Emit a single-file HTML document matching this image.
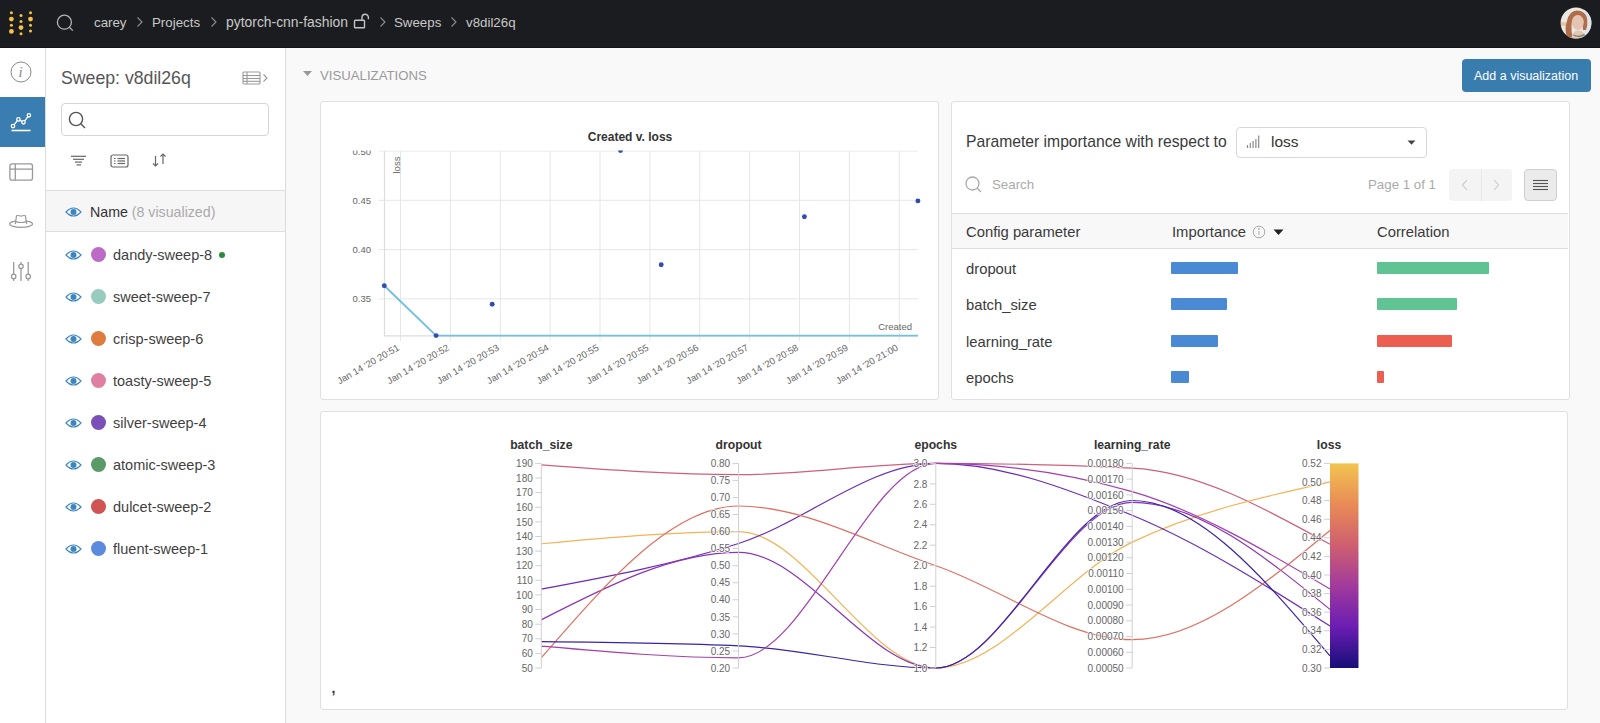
<!DOCTYPE html>
<html><head><meta charset="utf-8">
<style>
*{box-sizing:border-box;margin:0;padding:0}
html,body{width:1600px;height:723px;overflow:hidden;background:#f9f9f9;font-family:"Liberation Sans",sans-serif;color:#333}
.abs{position:absolute;white-space:nowrap;line-height:1}
#top{position:absolute;left:0;top:0;width:1600px;height:48px;background:#1b1c1f;border-bottom:1px solid #121316}
#rail{position:absolute;left:0;top:48px;width:46px;height:675px;background:#fff;border-right:1px solid #dcdcdc}
#side{position:absolute;left:46px;top:48px;width:240px;height:675px;background:#fff;border-right:1px solid #dcdcdc}
.panel{position:absolute;background:#fff;border:1px solid #e0e0e0;border-radius:3px}
.bc{color:#c9c9c9;font-size:13.3px;top:16px}
.chev{color:#8a8a8a}
.run{font-size:14.5px;color:#3f3f3f;left:113px}
.dot{position:absolute;width:15px;height:15px;border-radius:50%;left:91px}
.eye{position:absolute;left:65px}
svg text{font-family:"Liberation Sans",sans-serif}
.tr{font-size:14.8px;color:#3a3a3a;left:966px}
.bar{position:absolute;height:12px;border-radius:1px}
</style></head><body>

<!-- ================= TOP BAR ================= -->
<div id="top">
  <svg width="48" height="48" style="position:absolute;left:0;top:0">
    <g fill="#f6c343">
      <circle cx="11.4" cy="12.8" r="1.5"/><circle cx="11.4" cy="19.1" r="2.4"/><circle cx="11.4" cy="25.3" r="1.5"/><circle cx="11.4" cy="31.4" r="2.4"/>
      <circle cx="21" cy="15.6" r="1.5"/><circle cx="21" cy="21.5" r="1.5"/><circle cx="21" cy="27.6" r="2.4"/><circle cx="21" cy="33.8" r="1.5"/>
      <circle cx="30.5" cy="12.8" r="1.5"/><circle cx="30.5" cy="19.1" r="2.4"/><circle cx="30.5" cy="25.3" r="1.5"/><circle cx="30.5" cy="31" r="1.5"/>
    </g>
  </svg>
  <svg width="24" height="24" style="position:absolute;left:54px;top:11px" fill="none" stroke="#b4b4b4" stroke-width="1.3">
    <circle cx="10.4" cy="11.2" r="7"/><line x1="15.4" y1="16.2" x2="18.8" y2="19.6"/>
  </svg>
  <div class="abs bc" style="left:94px">carey</div>
  <svg class="abs" width="8" height="12" style="left:136px;top:16px" fill="none" stroke="#8f8f8f" stroke-width="1.1"><polyline points="1.5,1.5 6,6 1.5,10.5"/></svg>
  <div class="abs bc" style="left:152px">Projects</div>
  <svg class="abs" width="8" height="12" style="left:210px;top:16px" fill="none" stroke="#8f8f8f" stroke-width="1.1"><polyline points="1.5,1.5 6,6 1.5,10.5"/></svg>
  <div class="abs bc" style="left:226px;font-size:13.9px;top:15.5px">pytorch-cnn-fashion</div>
  <svg class="abs" width="18" height="18" style="left:353px;top:12px" fill="none" stroke="#c4c4c4" stroke-width="1.4">
    <rect x="1.5" y="8.2" width="10" height="7.6" rx="0.8"/><path d="M9 8 V5.5 a3.2 3.2 0 0 1 6.4 0 V7.2"/>
  </svg>
  <svg class="abs" width="8" height="12" style="left:379px;top:16px" fill="none" stroke="#8f8f8f" stroke-width="1.1"><polyline points="1.5,1.5 6,6 1.5,10.5"/></svg>
  <div class="abs bc" style="left:394px">Sweeps</div>
  <svg class="abs" width="8" height="12" style="left:450px;top:16px" fill="none" stroke="#8f8f8f" stroke-width="1.1"><polyline points="1.5,1.5 6,6 1.5,10.5"/></svg>
  <div class="abs bc" style="left:466px">v8dil26q</div>
  <!-- avatar -->
  <svg width="32" height="32" style="position:absolute;left:1560px;top:6.7px">
    <defs><clipPath id="av"><circle cx="16" cy="16" r="15.4"/></clipPath></defs>
    <g clip-path="url(#av)">
      <rect width="32" height="32" fill="#ebe8e3"/>
      <rect x="24" y="0" width="8" height="32" fill="#e1e5ea"/>
      <rect x="1" y="15" width="5" height="4" fill="#e0a868" opacity="0.5"/>
      <path d="M7 30 Q4 22 7 14 Q9 4 17 3.5 Q25 3.5 27 11 Q28 18 26 23 L23 23 Q23 12 17 9 Q12 11 11.5 18 Q11 25 13 31Z" fill="#b06d4a"/>
      <ellipse cx="17.8" cy="15.5" rx="6" ry="7.6" fill="#e6c4b4"/>
      <path d="M11 32 Q13 23 18 23.5 Q24 23 27 32Z" fill="#e3c5b3"/>
      <path d="M24 29 Q27 26.5 31 27.5 L32 32 L25 32Z" fill="#44509a"/>
      <path d="M13.5 28 Q19 31 24.5 27.5" fill="none" stroke="#66806c" stroke-width="1.1"/>
    </g>
  </svg>
</div>

<!-- ================= LEFT RAIL ================= -->
<div id="rail">
  <svg width="24" height="24" style="position:absolute;left:9px;top:12px" fill="none" stroke="#8a8a8a" stroke-width="1">
    <circle cx="12" cy="12" r="10"/>
  </svg>
  <div class="abs" style="left:18.5px;top:17px;font-family:'Liberation Serif',serif;font-style:italic;font-size:15px;color:#8a8a8a">i</div>
  <div style="position:absolute;left:0;top:49px;width:45px;height:50px;background:#3a7db1"></div>
  <svg width="46" height="46" style="position:absolute;left:0;top:52px" fill="none" stroke="#fff" stroke-width="1.3">
    <polyline points="13,126.1 18.4,119.4 23.5,122.3 28.9,115.3" transform="translate(0,-100)"/>
    <g transform="translate(0,-100)" fill="#3a7db1"><circle cx="13" cy="126.1" r="1.7"/><circle cx="18.4" cy="119.4" r="1.7"/><circle cx="23.5" cy="122.3" r="1.7"/><circle cx="28.9" cy="115.3" r="1.7"/></g>
    <line x1="11.5" y1="30.5" x2="30.5" y2="30.5" stroke-width="1.6"/>
  </svg>
  <svg width="46" height="46" style="position:absolute;left:0;top:102px" fill="none" stroke="#999" stroke-width="1.3">
    <rect x="9.9" y="13.8" width="22.6" height="16.4" rx="2.2"/><line x1="9.9" y1="19.1" x2="32.5" y2="19.1"/><line x1="15.3" y1="13.8" x2="15.3" y2="30.2"/>
  </svg>
  <svg width="46" height="46" style="position:absolute;left:0;top:152px" fill="none" stroke="#999" stroke-width="1.2">
    <ellipse cx="21.1" cy="24" rx="11.4" ry="3.3"/>
    <path d="M15.3,24.2 L16.5,15.8 Q18.5,15 21,16.2 Q23.5,15 25.4,15.8 L26.7,24.2" fill="#fff"/>
    <path d="M15.6,21.6 Q21,23.4 26.4,21.6"/>
  </svg>
  <svg width="24" height="24" style="position:absolute;left:9px;top:213px" fill="none" stroke="#9a9a9a" stroke-width="1.3">
    <line x1="4.7" y1="1" x2="4.7" y2="20"/><line x1="12" y1="1" x2="12" y2="20"/><line x1="19.2" y1="1" x2="19.2" y2="20"/>
    <circle cx="4.7" cy="15.4" r="2.2" fill="#fff"/><circle cx="12" cy="5.3" r="2.2" fill="#fff"/><circle cx="19.2" cy="15.4" r="2.2" fill="#fff"/>
  </svg>
</div>

<!-- ================= SIDEBAR ================= -->
<div id="side"></div>
<div class="abs" style="left:61px;top:70px;font-size:17.7px;color:#555">Sweep: v8dil26q</div>
<svg width="30" height="16" style="position:absolute;left:242px;top:70px" fill="none" stroke="#999" stroke-width="1.1">
  <rect x="1" y="2" width="17" height="12" rx="1"/><line x1="1" y1="5.5" x2="18" y2="5.5"/><line x1="1" y1="8.5" x2="18" y2="8.5"/><line x1="1" y1="11.3" x2="18" y2="11.3"/><line x1="5" y1="2" x2="5" y2="14"/>
  <polyline points="21.5,4.5 25,8 21.5,11.5"/>
</svg>
<div style="position:absolute;left:61px;top:103px;width:208px;height:33px;border:1px solid #d6d6d6;border-radius:4px;background:#fff"></div>
<svg width="20" height="20" style="position:absolute;left:67px;top:110px" fill="none" stroke="#555" stroke-width="1.4">
  <circle cx="9" cy="9" r="6.6"/><line x1="13.8" y1="13.8" x2="18" y2="18"/>
</svg>
<svg width="20" height="16" style="position:absolute;left:69px;top:152px" fill="none" stroke="#666" stroke-width="1.2">
  <line x1="2" y1="4.3" x2="17" y2="4.3"/><line x1="4" y1="7.3" x2="15" y2="7.3"/><line x1="6" y1="10.1" x2="13" y2="10.1"/><line x1="7.5" y1="12.9" x2="12" y2="12.9"/>
</svg>
<svg width="22" height="16" style="position:absolute;left:109.7px;top:152.5px" fill="none" stroke="#666" stroke-width="1.2">
  <rect x="1" y="2" width="17" height="12" rx="2"/><line x1="4" y1="5.5" x2="5.5" y2="5.5"/><line x1="4" y1="8" x2="5.5" y2="8"/><line x1="4" y1="10.5" x2="5.5" y2="10.5"/>
  <line x1="7.5" y1="5.5" x2="15" y2="5.5"/><line x1="7.5" y1="8" x2="15" y2="8"/><line x1="7.5" y1="10.5" x2="15" y2="10.5"/>
</svg>
<svg width="18" height="16" style="position:absolute;left:151px;top:152px" fill="none" stroke="#666" stroke-width="1.2">
  <line x1="4.5" y1="4" x2="4.5" y2="14"/><polyline points="2,11.5 4.5,14 7,11.5"/>
  <line x1="12" y1="2" x2="12" y2="12"/><polyline points="9.5,4.5 12,2 14.5,4.5"/>
</svg>
<div style="position:absolute;left:46px;top:190px;width:239px;height:42px;background:#f6f6f6;border-top:1px solid #dedede;border-bottom:1px solid #dedede"></div>
<svg width="18" height="12" style="position:absolute;left:65px;top:206px"><path d="M1 6 Q8.5 -2 16 6 Q8.5 14 1 6Z" fill="none" stroke="#3d85bf" stroke-width="1.1"/><circle cx="8.5" cy="6" r="3" fill="#3d85bf"/></svg>
<div class="abs" style="left:90px;top:204.5px;font-size:14.2px;color:#333">Name <span style="color:#aaa">(8 visualized)</span></div>

<svg width="18" height="12" style="position:absolute;left:65px;top:248.6px"><path d="M1 6 Q8.5 -2 16 6 Q8.5 14 1 6Z" fill="none" stroke="#3d85bf" stroke-width="1.1"/><circle cx="8.5" cy="6" r="3" fill="#3d85bf"/></svg>
<div class="dot" style="top:247.1px;background:#b96bc5"></div>
<div class="abs run" style="top:248.1px">dandy-sweep-8</div>
<svg width="18" height="12" style="position:absolute;left:65px;top:290.6px"><path d="M1 6 Q8.5 -2 16 6 Q8.5 14 1 6Z" fill="none" stroke="#3d85bf" stroke-width="1.1"/><circle cx="8.5" cy="6" r="3" fill="#3d85bf"/></svg>
<div class="dot" style="top:289.1px;background:#96cbbd"></div>
<div class="abs run" style="top:290.1px">sweet-sweep-7</div>
<svg width="18" height="12" style="position:absolute;left:65px;top:332.6px"><path d="M1 6 Q8.5 -2 16 6 Q8.5 14 1 6Z" fill="none" stroke="#3d85bf" stroke-width="1.1"/><circle cx="8.5" cy="6" r="3" fill="#3d85bf"/></svg>
<div class="dot" style="top:331.1px;background:#e07b40"></div>
<div class="abs run" style="top:332.1px">crisp-sweep-6</div>
<svg width="18" height="12" style="position:absolute;left:65px;top:374.6px"><path d="M1 6 Q8.5 -2 16 6 Q8.5 14 1 6Z" fill="none" stroke="#3d85bf" stroke-width="1.1"/><circle cx="8.5" cy="6" r="3" fill="#3d85bf"/></svg>
<div class="dot" style="top:373.1px;background:#e080a0"></div>
<div class="abs run" style="top:374.1px">toasty-sweep-5</div>
<svg width="18" height="12" style="position:absolute;left:65px;top:416.6px"><path d="M1 6 Q8.5 -2 16 6 Q8.5 14 1 6Z" fill="none" stroke="#3d85bf" stroke-width="1.1"/><circle cx="8.5" cy="6" r="3" fill="#3d85bf"/></svg>
<div class="dot" style="top:415.1px;background:#7a50b8"></div>
<div class="abs run" style="top:416.1px">silver-sweep-4</div>
<svg width="18" height="12" style="position:absolute;left:65px;top:458.6px"><path d="M1 6 Q8.5 -2 16 6 Q8.5 14 1 6Z" fill="none" stroke="#3d85bf" stroke-width="1.1"/><circle cx="8.5" cy="6" r="3" fill="#3d85bf"/></svg>
<div class="dot" style="top:457.1px;background:#5a9a68"></div>
<div class="abs run" style="top:458.1px">atomic-sweep-3</div>
<svg width="18" height="12" style="position:absolute;left:65px;top:500.6px"><path d="M1 6 Q8.5 -2 16 6 Q8.5 14 1 6Z" fill="none" stroke="#3d85bf" stroke-width="1.1"/><circle cx="8.5" cy="6" r="3" fill="#3d85bf"/></svg>
<div class="dot" style="top:499.1px;background:#d05454"></div>
<div class="abs run" style="top:500.1px">dulcet-sweep-2</div>
<svg width="18" height="12" style="position:absolute;left:65px;top:542.6px"><path d="M1 6 Q8.5 -2 16 6 Q8.5 14 1 6Z" fill="none" stroke="#3d85bf" stroke-width="1.1"/><circle cx="8.5" cy="6" r="3" fill="#3d85bf"/></svg>
<div class="dot" style="top:541.1px;background:#5b8ade"></div>
<div class="abs run" style="top:542.1px">fluent-sweep-1</div>
<div style="position:absolute;left:219px;top:251.6px;width:6px;height:6px;border-radius:50%;background:#2e8a3a"></div>


<!-- ================= MAIN ================= -->
<svg width="12" height="8" style="position:absolute;left:302px;top:70px"><polygon points="1,1 10,1 5.5,6" fill="#999"/></svg>
<div class="abs" style="left:320px;top:69px;font-size:13.2px;color:#999">VISUALIZATIONS</div>
<div style="position:absolute;left:1462px;top:59px;width:129px;height:33px;background:#397cae;border-radius:4px"></div>
<div class="abs" style="left:1474px;top:70px;font-size:12.5px;color:#fff">Add a visualization</div>

<!-- panel 1 -->
<div class="panel" style="left:320px;top:101px;width:619px;height:299px"></div>
<svg width="1600" height="723" style="position:absolute;left:0;top:0" font-size="9.5" fill="#666">
  <text x="630" y="140.5" text-anchor="middle" font-weight="bold" font-size="12" fill="#333">Created v. loss</text>
  <defs><clipPath id="pc1"><rect x="330" y="150.5" width="600" height="250"/></clipPath></defs>
  <g clip-path="url(#pc1)">
  <line x1="400.5" y1="151" x2="400.5" y2="341" stroke="#e6e6e6" stroke-width="1"/><line x1="450.38" y1="151" x2="450.38" y2="341" stroke="#e6e6e6" stroke-width="1"/><line x1="500.26" y1="151" x2="500.26" y2="341" stroke="#e6e6e6" stroke-width="1"/><line x1="550.14" y1="151" x2="550.14" y2="341" stroke="#e6e6e6" stroke-width="1"/><line x1="600.02" y1="151" x2="600.02" y2="341" stroke="#e6e6e6" stroke-width="1"/><line x1="649.9" y1="151" x2="649.9" y2="341" stroke="#e6e6e6" stroke-width="1"/><line x1="699.78" y1="151" x2="699.78" y2="341" stroke="#e6e6e6" stroke-width="1"/><line x1="749.6600000000001" y1="151" x2="749.6600000000001" y2="341" stroke="#e6e6e6" stroke-width="1"/><line x1="799.54" y1="151" x2="799.54" y2="341" stroke="#e6e6e6" stroke-width="1"/><line x1="849.4200000000001" y1="151" x2="849.4200000000001" y2="341" stroke="#e6e6e6" stroke-width="1"/><line x1="899.3" y1="151" x2="899.3" y2="341" stroke="#e6e6e6" stroke-width="1"/><line x1="378.5" y1="151" x2="918" y2="151" stroke="#e6e6e6" stroke-width="1"/><line x1="378.5" y1="200.3" x2="918" y2="200.3" stroke="#e6e6e6" stroke-width="1"/><line x1="378.5" y1="249.6" x2="918" y2="249.6" stroke="#e6e6e6" stroke-width="1"/><line x1="378.5" y1="298.9" x2="918" y2="298.9" stroke="#e6e6e6" stroke-width="1"/>
  <text x="371" y="154.5" text-anchor="end">0.50</text><text x="371" y="203.8" text-anchor="end">0.45</text><text x="371" y="253.1" text-anchor="end">0.40</text><text x="371" y="302.4" text-anchor="end">0.35</text>
  </g>
  <line x1="384.5" y1="151" x2="384.5" y2="336" stroke="#dedede" stroke-width="1.2"/>
  <line x1="384" y1="335.8" x2="918" y2="335.8" stroke="#dedede" stroke-width="1.2"/>
  <text transform="translate(400,173.5) rotate(-90)" font-size="9.5" fill="#666">loss</text>
  <text x="912" y="330" text-anchor="end" font-size="9.5" fill="#666">Created</text>
  <polyline points="384.3,285.8 436.1,335.6 918,335.6" fill="none" stroke="#72c0de" stroke-width="1.9"/>
  <g clip-path="url(#pc1)"><circle cx="384.3" cy="285.8" r="2.45" fill="#2f4cb3"/><circle cx="436.1" cy="335.6" r="2.45" fill="#2f4cb3"/><circle cx="492.2" cy="304.2" r="2.45" fill="#2f4cb3"/><circle cx="620.5" cy="150.5" r="2.45" fill="#2f4cb3"/><circle cx="661.2" cy="264.8" r="2.45" fill="#2f4cb3"/><circle cx="804.4" cy="216.7" r="2.45" fill="#2f4cb3"/><circle cx="917.9" cy="200.9" r="2.45" fill="#2f4cb3"/></g>
  <text transform="translate(400.0,349.5) rotate(-30)" text-anchor="end">Jan 14 '20 20:51</text><text transform="translate(449.88,349.5) rotate(-30)" text-anchor="end">Jan 14 '20 20:52</text><text transform="translate(499.76,349.5) rotate(-30)" text-anchor="end">Jan 14 '20 20:53</text><text transform="translate(549.64,349.5) rotate(-30)" text-anchor="end">Jan 14 '20 20:54</text><text transform="translate(599.52,349.5) rotate(-30)" text-anchor="end">Jan 14 '20 20:55</text><text transform="translate(649.4,349.5) rotate(-30)" text-anchor="end">Jan 14 '20 20:55</text><text transform="translate(699.28,349.5) rotate(-30)" text-anchor="end">Jan 14 '20 20:56</text><text transform="translate(749.1600000000001,349.5) rotate(-30)" text-anchor="end">Jan 14 '20 20:57</text><text transform="translate(799.04,349.5) rotate(-30)" text-anchor="end">Jan 14 '20 20:58</text><text transform="translate(848.9200000000001,349.5) rotate(-30)" text-anchor="end">Jan 14 '20 20:59</text><text transform="translate(898.8,349.5) rotate(-30)" text-anchor="end">Jan 14 '20 21:00</text>
</svg>

<!-- panel 2 -->
<div class="panel" style="left:951px;top:101px;width:619px;height:299px"></div>
<div class="abs" style="left:966px;top:133.5px;font-size:15.7px;color:#3a3a3a">Parameter importance with respect to</div>
<div style="position:absolute;left:1236px;top:127px;width:191px;height:31px;border:1px solid #d8d8d8;border-radius:4px;background:#fff"></div>
<svg width="18" height="16" style="position:absolute;left:1246px;top:134px" stroke="#8a8a8a" stroke-width="1.2"><line x1="1.5" y1="14" x2="1.5" y2="11"/><line x1="4.3" y1="14" x2="4.3" y2="9"/><line x1="7.1" y1="14" x2="7.1" y2="7"/><line x1="9.9" y1="14" x2="9.9" y2="5"/><line x1="12.7" y1="14" x2="12.7" y2="1.5"/></svg>
<div class="abs" style="left:1271px;top:134px;font-size:15.5px;color:#333">loss</div>
<svg width="10" height="6" style="position:absolute;left:1407px;top:140px"><polygon points="0.5,0.5 8.5,0.5 4.5,4.8" fill="#444"/></svg>
<svg width="20" height="20" style="position:absolute;left:964px;top:175px" fill="none" stroke="#aaa" stroke-width="1.3"><circle cx="8.5" cy="8.5" r="6.5"/><line x1="13.2" y1="13.2" x2="17" y2="17"/></svg>
<div class="abs" style="left:992px;top:178px;font-size:13.3px;color:#aaa">Search</div>
<div class="abs" style="left:1368px;top:178px;font-size:13.3px;color:#aaa">Page 1 of 1</div>
<div style="position:absolute;left:1449px;top:169px;width:63px;height:32px;background:#f4f4f4;border-radius:4px"></div>
<div style="position:absolute;left:1481px;top:169px;width:1px;height:32px;background:#e8e8e8"></div>
<svg width="63" height="32" style="position:absolute;left:1449px;top:169px" fill="none" stroke="#c8c8c8" stroke-width="1.1"><polyline points="18,11 13.5,16 18,21"/><polyline points="45,11 49.5,16 45,21"/></svg>
<div style="position:absolute;left:1524px;top:169px;width:33px;height:32px;background:#ebebeb;border:1px solid #cfcfcf;border-radius:4px"></div>
<svg width="33" height="32" style="position:absolute;left:1524px;top:169px" stroke="#555" stroke-width="1.1"><line x1="9" y1="11.5" x2="24" y2="11.5"/><line x1="9" y1="14.5" x2="24" y2="14.5"/><line x1="9" y1="17.5" x2="24" y2="17.5"/><line x1="9" y1="20.5" x2="24" y2="20.5"/></svg>
<div style="position:absolute;left:952px;top:213px;width:616px;height:36px;background:#f8f8f8;border-top:1px solid #dedede;border-bottom:1px solid #dedede"></div>
<div class="abs tr" style="top:225px">Config parameter</div>
<div class="abs tr" style="top:225px;left:1172px">Importance</div>
<svg width="14" height="14" style="position:absolute;left:1252px;top:225px" fill="none" stroke="#aaa" stroke-width="1"><circle cx="7" cy="7" r="5.8"/><line x1="7" y1="6" x2="7" y2="10"/><circle cx="7" cy="4" r="0.5" fill="#aaa"/></svg>
<svg width="12" height="8" style="position:absolute;left:1273px;top:229px"><polygon points="0.5,0.5 10.5,0.5 5.5,6" fill="#222"/></svg>
<div class="abs tr" style="top:225px;left:1377px">Correlation</div>
<div class="abs tr" style="top:262px">dropout</div>
<div class="abs tr" style="top:298px">batch_size</div>
<div class="abs tr" style="top:335px">learning_rate</div>
<div class="abs tr" style="top:371px">epochs</div>
<div class="bar" style="left:1171px;top:261.5px;width:67px;background:#4a8ad5"></div>
<div class="bar" style="left:1171px;top:298px;width:56px;background:#4a8ad5"></div>
<div class="bar" style="left:1171px;top:334.5px;width:47px;background:#4a8ad5"></div>
<div class="bar" style="left:1171px;top:371px;width:17.5px;background:#4a8ad5"></div>
<div class="bar" style="left:1377px;top:261.5px;width:112px;background:#5fc393"></div>
<div class="bar" style="left:1377px;top:298px;width:80px;background:#5fc393"></div>
<div class="bar" style="left:1377px;top:334.5px;width:74.5px;background:#ec5f50"></div>
<div class="bar" style="left:1377px;top:371px;width:6.5px;background:#ec5f50"></div>

<!-- panel 3 -->
<div class="panel" style="left:320px;top:411px;width:1248px;height:299px"></div>
<div class="abs" style="left:331.5px;top:681px;font-size:14px;color:#333;font-weight:bold">,</div>
<svg width="1600" height="723" style="position:absolute;left:0;top:0" font-size="10" fill="#666">
  <defs><linearGradient id="lg" x1="0" y1="0" x2="0" y2="1">
    <stop offset="0" stop-color="#f3c450"/><stop offset="0.2" stop-color="#e88b56"/><stop offset="0.4" stop-color="#cf5f6f"/>
    <stop offset="0.6" stop-color="#a13a9c"/><stop offset="0.8" stop-color="#6a1db2"/><stop offset="1" stop-color="#170e78"/>
  </linearGradient></defs>
  <g font-weight="bold" font-size="12.2" fill="#333" text-anchor="middle">
    <text x="541.3" y="448.5">batch_size</text><text x="738.6" y="448.5">dropout</text><text x="935.8" y="448.5">epochs</text><text x="1132.2" y="448.5">learning_rate</text><text x="1329" y="448.5">loss</text>
  </g>
  <rect x="1330" y="463.4" width="28.5" height="204.6" fill="url(#lg)"/>
  <path d="M541.3,464.9C607.1,469.8 672.8,474.7 738.6,474.7C804.3,474.7 870.1,463.4 935.8,463.4C1001.3,463.4 1066.7,465.0 1132.2,468.1C1198.1,471.3 1264.1,507.8 1330.0,544.3" stroke="#cf5f7c" stroke-width="1.2" fill="none"/>
<path d="M541.3,543.8C607.1,537.7 672.8,531.6 738.6,531.6C804.3,531.6 870.1,668.0 935.8,668.0C1001.3,668.0 1066.7,573.1 1132.2,542.1C1198.1,510.9 1264.1,496.5 1330.0,482.0" stroke="#f3b357" stroke-width="1.2" fill="none"/>
<path d="M541.3,589.1C607.1,576.8 672.8,564.5 738.6,543.5C804.3,522.6 870.1,463.4 935.8,463.4C1001.3,463.4 1066.7,488.4 1132.2,515.3C1198.1,542.5 1264.1,584.3 1330.0,626.1" stroke="#6a2bb8" stroke-width="1.2" fill="none"/>
<path d="M541.3,619.8C607.1,586.1 672.8,552.4 738.6,552.4C804.3,552.4 870.1,668.0 935.8,668.0C1001.3,668.0 1066.7,502.4 1132.2,502.4C1198.1,502.4 1264.1,555.9 1330.0,609.4" stroke="#8a35b5" stroke-width="1.2" fill="none"/>
<path d="M541.3,657.8C607.1,581.9 672.8,506.0 738.6,506.0C804.3,506.0 870.1,543.4 935.8,565.7C1001.3,587.9 1066.7,639.7 1132.2,639.7C1198.1,639.7 1264.1,585.0 1330.0,530.4" stroke="#df6f62" stroke-width="1.2" fill="none"/>
<path d="M541.3,641.7C607.1,642.4 672.8,643.1 738.6,645.8C804.3,648.6 870.1,668.0 935.8,668.0C1001.3,668.0 1066.7,500.5 1132.2,500.5C1198.1,500.5 1264.1,578.2 1330.0,655.9" stroke="#3a23a6" stroke-width="1.2" fill="none"/>
<path d="M541.3,646.1C607.1,651.9 672.8,657.8 738.6,657.8C804.3,657.8 870.1,463.4 935.8,463.4C1001.3,463.4 1066.7,472.8 1132.2,491.7C1198.1,510.8 1264.1,549.9 1330.0,589.0" stroke="#a440ad" stroke-width="1.2" fill="none"/>
  <g stroke-linejoin="round"><line x1="541.3" y1="463.4" x2="541.3" y2="668.0" stroke="#d0d0d0" stroke-width="1"/><line x1="535.3" y1="668.0" x2="541.3" y2="668.0" stroke="#d0d0d0" stroke-width="1"/><text x="532.8" y="671.6" text-anchor="end" stroke="#fff" stroke-width="1.6" stroke-opacity="0.85" paint-order="stroke">50</text><line x1="535.3" y1="653.4" x2="541.3" y2="653.4" stroke="#d0d0d0" stroke-width="1"/><text x="532.8" y="657.0" text-anchor="end" stroke="#fff" stroke-width="1.6" stroke-opacity="0.85" paint-order="stroke">60</text><line x1="535.3" y1="638.8" x2="541.3" y2="638.8" stroke="#d0d0d0" stroke-width="1"/><text x="532.8" y="642.4" text-anchor="end" stroke="#fff" stroke-width="1.6" stroke-opacity="0.85" paint-order="stroke">70</text><line x1="535.3" y1="624.2" x2="541.3" y2="624.2" stroke="#d0d0d0" stroke-width="1"/><text x="532.8" y="627.8" text-anchor="end" stroke="#fff" stroke-width="1.6" stroke-opacity="0.85" paint-order="stroke">80</text><line x1="535.3" y1="609.5" x2="541.3" y2="609.5" stroke="#d0d0d0" stroke-width="1"/><text x="532.8" y="613.1" text-anchor="end" stroke="#fff" stroke-width="1.6" stroke-opacity="0.85" paint-order="stroke">90</text><line x1="535.3" y1="594.9" x2="541.3" y2="594.9" stroke="#d0d0d0" stroke-width="1"/><text x="532.8" y="598.5" text-anchor="end" stroke="#fff" stroke-width="1.6" stroke-opacity="0.85" paint-order="stroke">100</text><line x1="535.3" y1="580.3" x2="541.3" y2="580.3" stroke="#d0d0d0" stroke-width="1"/><text x="532.8" y="583.9" text-anchor="end" stroke="#fff" stroke-width="1.6" stroke-opacity="0.85" paint-order="stroke">110</text><line x1="535.3" y1="565.7" x2="541.3" y2="565.7" stroke="#d0d0d0" stroke-width="1"/><text x="532.8" y="569.3" text-anchor="end" stroke="#fff" stroke-width="1.6" stroke-opacity="0.85" paint-order="stroke">120</text><line x1="535.3" y1="551.1" x2="541.3" y2="551.1" stroke="#d0d0d0" stroke-width="1"/><text x="532.8" y="554.7" text-anchor="end" stroke="#fff" stroke-width="1.6" stroke-opacity="0.85" paint-order="stroke">130</text><line x1="535.3" y1="536.5" x2="541.3" y2="536.5" stroke="#d0d0d0" stroke-width="1"/><text x="532.8" y="540.1" text-anchor="end" stroke="#fff" stroke-width="1.6" stroke-opacity="0.85" paint-order="stroke">140</text><line x1="535.3" y1="521.9" x2="541.3" y2="521.9" stroke="#d0d0d0" stroke-width="1"/><text x="532.8" y="525.5" text-anchor="end" stroke="#fff" stroke-width="1.6" stroke-opacity="0.85" paint-order="stroke">150</text><line x1="535.3" y1="507.2" x2="541.3" y2="507.2" stroke="#d0d0d0" stroke-width="1"/><text x="532.8" y="510.8" text-anchor="end" stroke="#fff" stroke-width="1.6" stroke-opacity="0.85" paint-order="stroke">160</text><line x1="535.3" y1="492.6" x2="541.3" y2="492.6" stroke="#d0d0d0" stroke-width="1"/><text x="532.8" y="496.2" text-anchor="end" stroke="#fff" stroke-width="1.6" stroke-opacity="0.85" paint-order="stroke">170</text><line x1="535.3" y1="478.0" x2="541.3" y2="478.0" stroke="#d0d0d0" stroke-width="1"/><text x="532.8" y="481.6" text-anchor="end" stroke="#fff" stroke-width="1.6" stroke-opacity="0.85" paint-order="stroke">180</text><line x1="535.3" y1="463.4" x2="541.3" y2="463.4" stroke="#d0d0d0" stroke-width="1"/><text x="532.8" y="467.0" text-anchor="end" stroke="#fff" stroke-width="1.6" stroke-opacity="0.85" paint-order="stroke">190</text>
<line x1="738.6" y1="463.4" x2="738.6" y2="668.0" stroke="#d0d0d0" stroke-width="1"/><line x1="732.6" y1="668.0" x2="738.6" y2="668.0" stroke="#d0d0d0" stroke-width="1"/><text x="730.1" y="671.6" text-anchor="end" stroke="#fff" stroke-width="1.6" stroke-opacity="0.85" paint-order="stroke">0.20</text><line x1="732.6" y1="651.0" x2="738.6" y2="651.0" stroke="#d0d0d0" stroke-width="1"/><text x="730.1" y="654.6" text-anchor="end" stroke="#fff" stroke-width="1.6" stroke-opacity="0.85" paint-order="stroke">0.25</text><line x1="732.6" y1="633.9" x2="738.6" y2="633.9" stroke="#d0d0d0" stroke-width="1"/><text x="730.1" y="637.5" text-anchor="end" stroke="#fff" stroke-width="1.6" stroke-opacity="0.85" paint-order="stroke">0.30</text><line x1="732.6" y1="616.9" x2="738.6" y2="616.9" stroke="#d0d0d0" stroke-width="1"/><text x="730.1" y="620.5" text-anchor="end" stroke="#fff" stroke-width="1.6" stroke-opacity="0.85" paint-order="stroke">0.35</text><line x1="732.6" y1="599.8" x2="738.6" y2="599.8" stroke="#d0d0d0" stroke-width="1"/><text x="730.1" y="603.4" text-anchor="end" stroke="#fff" stroke-width="1.6" stroke-opacity="0.85" paint-order="stroke">0.40</text><line x1="732.6" y1="582.8" x2="738.6" y2="582.8" stroke="#d0d0d0" stroke-width="1"/><text x="730.1" y="586.4" text-anchor="end" stroke="#fff" stroke-width="1.6" stroke-opacity="0.85" paint-order="stroke">0.45</text><line x1="732.6" y1="565.7" x2="738.6" y2="565.7" stroke="#d0d0d0" stroke-width="1"/><text x="730.1" y="569.3" text-anchor="end" stroke="#fff" stroke-width="1.6" stroke-opacity="0.85" paint-order="stroke">0.50</text><line x1="732.6" y1="548.6" x2="738.6" y2="548.6" stroke="#d0d0d0" stroke-width="1"/><text x="730.1" y="552.2" text-anchor="end" stroke="#fff" stroke-width="1.6" stroke-opacity="0.85" paint-order="stroke">0.55</text><line x1="732.6" y1="531.6" x2="738.6" y2="531.6" stroke="#d0d0d0" stroke-width="1"/><text x="730.1" y="535.2" text-anchor="end" stroke="#fff" stroke-width="1.6" stroke-opacity="0.85" paint-order="stroke">0.60</text><line x1="732.6" y1="514.5" x2="738.6" y2="514.5" stroke="#d0d0d0" stroke-width="1"/><text x="730.1" y="518.1" text-anchor="end" stroke="#fff" stroke-width="1.6" stroke-opacity="0.85" paint-order="stroke">0.65</text><line x1="732.6" y1="497.5" x2="738.6" y2="497.5" stroke="#d0d0d0" stroke-width="1"/><text x="730.1" y="501.1" text-anchor="end" stroke="#fff" stroke-width="1.6" stroke-opacity="0.85" paint-order="stroke">0.70</text><line x1="732.6" y1="480.4" x2="738.6" y2="480.4" stroke="#d0d0d0" stroke-width="1"/><text x="730.1" y="484.1" text-anchor="end" stroke="#fff" stroke-width="1.6" stroke-opacity="0.85" paint-order="stroke">0.75</text><line x1="732.6" y1="463.4" x2="738.6" y2="463.4" stroke="#d0d0d0" stroke-width="1"/><text x="730.1" y="467.0" text-anchor="end" stroke="#fff" stroke-width="1.6" stroke-opacity="0.85" paint-order="stroke">0.80</text>
<line x1="935.8" y1="463.4" x2="935.8" y2="668.0" stroke="#d0d0d0" stroke-width="1"/><line x1="929.8" y1="668.0" x2="935.8" y2="668.0" stroke="#d0d0d0" stroke-width="1"/><text x="927.3" y="671.6" text-anchor="end" stroke="#fff" stroke-width="1.6" stroke-opacity="0.85" paint-order="stroke">1.0</text><line x1="929.8" y1="647.5" x2="935.8" y2="647.5" stroke="#d0d0d0" stroke-width="1"/><text x="927.3" y="651.1" text-anchor="end" stroke="#fff" stroke-width="1.6" stroke-opacity="0.85" paint-order="stroke">1.2</text><line x1="929.8" y1="627.1" x2="935.8" y2="627.1" stroke="#d0d0d0" stroke-width="1"/><text x="927.3" y="630.7" text-anchor="end" stroke="#fff" stroke-width="1.6" stroke-opacity="0.85" paint-order="stroke">1.4</text><line x1="929.8" y1="606.6" x2="935.8" y2="606.6" stroke="#d0d0d0" stroke-width="1"/><text x="927.3" y="610.2" text-anchor="end" stroke="#fff" stroke-width="1.6" stroke-opacity="0.85" paint-order="stroke">1.6</text><line x1="929.8" y1="586.2" x2="935.8" y2="586.2" stroke="#d0d0d0" stroke-width="1"/><text x="927.3" y="589.8" text-anchor="end" stroke="#fff" stroke-width="1.6" stroke-opacity="0.85" paint-order="stroke">1.8</text><line x1="929.8" y1="565.7" x2="935.8" y2="565.7" stroke="#d0d0d0" stroke-width="1"/><text x="927.3" y="569.3" text-anchor="end" stroke="#fff" stroke-width="1.6" stroke-opacity="0.85" paint-order="stroke">2.0</text><line x1="929.8" y1="545.2" x2="935.8" y2="545.2" stroke="#d0d0d0" stroke-width="1"/><text x="927.3" y="548.8" text-anchor="end" stroke="#fff" stroke-width="1.6" stroke-opacity="0.85" paint-order="stroke">2.2</text><line x1="929.8" y1="524.8" x2="935.8" y2="524.8" stroke="#d0d0d0" stroke-width="1"/><text x="927.3" y="528.4" text-anchor="end" stroke="#fff" stroke-width="1.6" stroke-opacity="0.85" paint-order="stroke">2.4</text><line x1="929.8" y1="504.3" x2="935.8" y2="504.3" stroke="#d0d0d0" stroke-width="1"/><text x="927.3" y="507.9" text-anchor="end" stroke="#fff" stroke-width="1.6" stroke-opacity="0.85" paint-order="stroke">2.6</text><line x1="929.8" y1="483.9" x2="935.8" y2="483.9" stroke="#d0d0d0" stroke-width="1"/><text x="927.3" y="487.5" text-anchor="end" stroke="#fff" stroke-width="1.6" stroke-opacity="0.85" paint-order="stroke">2.8</text><line x1="929.8" y1="463.4" x2="935.8" y2="463.4" stroke="#d0d0d0" stroke-width="1"/><text x="927.3" y="467.0" text-anchor="end" stroke="#fff" stroke-width="1.6" stroke-opacity="0.85" paint-order="stroke">3.0</text>
<line x1="1132.2" y1="463.4" x2="1132.2" y2="668.0" stroke="#d0d0d0" stroke-width="1"/><line x1="1126.2" y1="668.0" x2="1132.2" y2="668.0" stroke="#d0d0d0" stroke-width="1"/><text x="1123.7" y="671.6" text-anchor="end" stroke="#fff" stroke-width="1.6" stroke-opacity="0.85" paint-order="stroke">0.00050</text><line x1="1126.2" y1="652.3" x2="1132.2" y2="652.3" stroke="#d0d0d0" stroke-width="1"/><text x="1123.7" y="655.9" text-anchor="end" stroke="#fff" stroke-width="1.6" stroke-opacity="0.85" paint-order="stroke">0.00060</text><line x1="1126.2" y1="636.5" x2="1132.2" y2="636.5" stroke="#d0d0d0" stroke-width="1"/><text x="1123.7" y="640.1" text-anchor="end" stroke="#fff" stroke-width="1.6" stroke-opacity="0.85" paint-order="stroke">0.00070</text><line x1="1126.2" y1="620.8" x2="1132.2" y2="620.8" stroke="#d0d0d0" stroke-width="1"/><text x="1123.7" y="624.4" text-anchor="end" stroke="#fff" stroke-width="1.6" stroke-opacity="0.85" paint-order="stroke">0.00080</text><line x1="1126.2" y1="605.0" x2="1132.2" y2="605.0" stroke="#d0d0d0" stroke-width="1"/><text x="1123.7" y="608.6" text-anchor="end" stroke="#fff" stroke-width="1.6" stroke-opacity="0.85" paint-order="stroke">0.00090</text><line x1="1126.2" y1="589.3" x2="1132.2" y2="589.3" stroke="#d0d0d0" stroke-width="1"/><text x="1123.7" y="592.9" text-anchor="end" stroke="#fff" stroke-width="1.6" stroke-opacity="0.85" paint-order="stroke">0.00100</text><line x1="1126.2" y1="573.6" x2="1132.2" y2="573.6" stroke="#d0d0d0" stroke-width="1"/><text x="1123.7" y="577.2" text-anchor="end" stroke="#fff" stroke-width="1.6" stroke-opacity="0.85" paint-order="stroke">0.00110</text><line x1="1126.2" y1="557.8" x2="1132.2" y2="557.8" stroke="#d0d0d0" stroke-width="1"/><text x="1123.7" y="561.4" text-anchor="end" stroke="#fff" stroke-width="1.6" stroke-opacity="0.85" paint-order="stroke">0.00120</text><line x1="1126.2" y1="542.1" x2="1132.2" y2="542.1" stroke="#d0d0d0" stroke-width="1"/><text x="1123.7" y="545.7" text-anchor="end" stroke="#fff" stroke-width="1.6" stroke-opacity="0.85" paint-order="stroke">0.00130</text><line x1="1126.2" y1="526.4" x2="1132.2" y2="526.4" stroke="#d0d0d0" stroke-width="1"/><text x="1123.7" y="530.0" text-anchor="end" stroke="#fff" stroke-width="1.6" stroke-opacity="0.85" paint-order="stroke">0.00140</text><line x1="1126.2" y1="510.6" x2="1132.2" y2="510.6" stroke="#d0d0d0" stroke-width="1"/><text x="1123.7" y="514.2" text-anchor="end" stroke="#fff" stroke-width="1.6" stroke-opacity="0.85" paint-order="stroke">0.00150</text><line x1="1126.2" y1="494.9" x2="1132.2" y2="494.9" stroke="#d0d0d0" stroke-width="1"/><text x="1123.7" y="498.5" text-anchor="end" stroke="#fff" stroke-width="1.6" stroke-opacity="0.85" paint-order="stroke">0.00160</text><line x1="1126.2" y1="479.1" x2="1132.2" y2="479.1" stroke="#d0d0d0" stroke-width="1"/><text x="1123.7" y="482.7" text-anchor="end" stroke="#fff" stroke-width="1.6" stroke-opacity="0.85" paint-order="stroke">0.00170</text><line x1="1126.2" y1="463.4" x2="1132.2" y2="463.4" stroke="#d0d0d0" stroke-width="1"/><text x="1123.7" y="467.0" text-anchor="end" stroke="#fff" stroke-width="1.6" stroke-opacity="0.85" paint-order="stroke">0.00180</text>
<line x1="1324" y1="668.0" x2="1330" y2="668.0" stroke="#d0d0d0" stroke-width="1"/><text x="1321.5" y="671.6" text-anchor="end" stroke="#fff" stroke-width="1.6" stroke-opacity="0.85" paint-order="stroke">0.30</text><line x1="1324" y1="649.4" x2="1330" y2="649.4" stroke="#d0d0d0" stroke-width="1"/><text x="1321.5" y="653.0" text-anchor="end" stroke="#fff" stroke-width="1.6" stroke-opacity="0.85" paint-order="stroke">0.32</text><line x1="1324" y1="630.8" x2="1330" y2="630.8" stroke="#d0d0d0" stroke-width="1"/><text x="1321.5" y="634.4" text-anchor="end" stroke="#fff" stroke-width="1.6" stroke-opacity="0.85" paint-order="stroke">0.34</text><line x1="1324" y1="612.2" x2="1330" y2="612.2" stroke="#d0d0d0" stroke-width="1"/><text x="1321.5" y="615.8" text-anchor="end" stroke="#fff" stroke-width="1.6" stroke-opacity="0.85" paint-order="stroke">0.36</text><line x1="1324" y1="593.6" x2="1330" y2="593.6" stroke="#d0d0d0" stroke-width="1"/><text x="1321.5" y="597.2" text-anchor="end" stroke="#fff" stroke-width="1.6" stroke-opacity="0.85" paint-order="stroke">0.38</text><line x1="1324" y1="575.0" x2="1330" y2="575.0" stroke="#d0d0d0" stroke-width="1"/><text x="1321.5" y="578.6" text-anchor="end" stroke="#fff" stroke-width="1.6" stroke-opacity="0.85" paint-order="stroke">0.40</text><line x1="1324" y1="556.4" x2="1330" y2="556.4" stroke="#d0d0d0" stroke-width="1"/><text x="1321.5" y="560.0" text-anchor="end" stroke="#fff" stroke-width="1.6" stroke-opacity="0.85" paint-order="stroke">0.42</text><line x1="1324" y1="537.8" x2="1330" y2="537.8" stroke="#d0d0d0" stroke-width="1"/><text x="1321.5" y="541.4" text-anchor="end" stroke="#fff" stroke-width="1.6" stroke-opacity="0.85" paint-order="stroke">0.44</text><line x1="1324" y1="519.2" x2="1330" y2="519.2" stroke="#d0d0d0" stroke-width="1"/><text x="1321.5" y="522.8" text-anchor="end" stroke="#fff" stroke-width="1.6" stroke-opacity="0.85" paint-order="stroke">0.46</text><line x1="1324" y1="500.6" x2="1330" y2="500.6" stroke="#d0d0d0" stroke-width="1"/><text x="1321.5" y="504.2" text-anchor="end" stroke="#fff" stroke-width="1.6" stroke-opacity="0.85" paint-order="stroke">0.48</text><line x1="1324" y1="482.0" x2="1330" y2="482.0" stroke="#d0d0d0" stroke-width="1"/><text x="1321.5" y="485.6" text-anchor="end" stroke="#fff" stroke-width="1.6" stroke-opacity="0.85" paint-order="stroke">0.50</text><line x1="1324" y1="463.4" x2="1330" y2="463.4" stroke="#d0d0d0" stroke-width="1"/><text x="1321.5" y="467.0" text-anchor="end" stroke="#fff" stroke-width="1.6" stroke-opacity="0.85" paint-order="stroke">0.52</text></g>
</svg>

</body></html>
